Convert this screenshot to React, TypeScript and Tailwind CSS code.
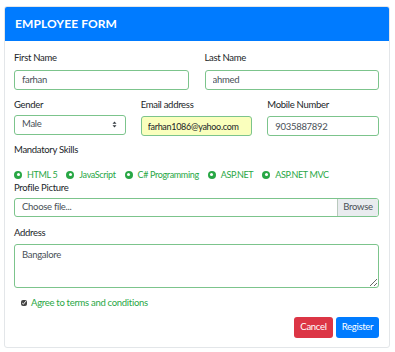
import { useState } from 'react'

const skills = ['HTML 5', 'JavaScript', 'C# Programming', 'ASP.NET', 'ASP.NET MVC']

const inputCls =
    'w-full h-[20px] rounded-[3px] border border-[#7cc48c] px-[7px] text-[9.5px] tracking-[-0.3px] text-[#495057] outline-none'

function Label({ children }: { children: React.ReactNode }) {
    return <div className="text-[9.5px] tracking-[-0.3px] leading-[14px] text-[#212529]">{children}</div>
}

export default function App() {
    const [agree, setAgree] = useState(true)

    return (
        <div className="min-h-screen bg-white pt-[6px] pl-[4px]" style={{ fontFamily: 'Lato, "Open Sans", sans-serif' }}>
            <div className="w-[386px] border border-[#e3e6e9] rounded-[3px] overflow-hidden">
                {/* Header */}
                <div className="h-[34px] bg-[#007bff] px-[10px] flex items-center">
                    <h2 className="text-white font-bold text-[12px] tracking-[0.1px]">EMPLOYEE FORM</h2>
                </div>

                {/* Body */}
                <div className="pl-[9px] pr-[10px] pt-[10px] pb-[9px]">
                    <div className="grid grid-cols-2 gap-x-[16px]">
                        <div>
                            <Label>First Name</Label>
                            <input readOnly defaultValue="farhan" className={`${inputCls} mt-[2px]`} />
                        </div>
                        <div>
                            <Label>Last Name</Label>
                            <input readOnly defaultValue="ahmed" className={`${inputCls} mt-[2px]`} />
                        </div>
                    </div>

                    <div className="grid grid-cols-3 gap-x-[15px] mt-[8px]">
                        <div>
                            <Label>Gender</Label>
                            <div className={`${inputCls} mt-[3px] flex items-center justify-between`}>
                                <span>Male</span>
                                <svg width="5" height="7" viewBox="0 0 5 7" className="mr-[1px]">
                                    <path d="M2.5 0.5 L4.5 2.8 H0.5 Z M2.5 6.5 L4.5 4.2 H0.5 Z" fill="#343a40" />
                                </svg>
                            </div>
                        </div>
                        <div>
                            <Label>Email address</Label>
                            <input
                                readOnly
                                defaultValue="farhan1086@yahoo.com"
                                className="mt-[3px] w-full h-[20px] rounded-[3px] border border-[#7cc48c] px-[6px] text-[9px] tracking-[-0.3px] bg-[#faffbd] text-[#212529] outline-none"
                            />
                        </div>
                        <div>
                            <Label>Mobile Number</Label>
                            <input readOnly defaultValue="9035887892" className={`${inputCls} mt-[3px]`} />
                        </div>
                    </div>

                    <div className="mt-[7px]">
                        <Label>Mandatory Skills</Label>
                    </div>
                    <div className="mt-[11px] flex items-center gap-x-[9px] h-[13px]">
                        {skills.map((s) => (
                            <div key={s} className="flex items-center gap-[5px]">
                                <span className="w-[8px] h-[8px] rounded-full bg-[#28a745] flex items-center justify-center">
                                    <span className="w-[3px] h-[3px] rounded-full bg-white" />
                                </span>
                                <span className="text-[9px] tracking-[-0.35px] text-[#28a745]">{s}</span>
                            </div>
                        ))}
                    </div>

                    <div>
                        <Label>Profile Picture</Label>
                    </div>
                    <div className="mt-[3px] h-[19px] flex rounded-[3px] border border-[#7cc48c] overflow-hidden text-[9.5px] tracking-[-0.3px] text-[#495057]">
                        <div className="flex-1 flex items-center px-[7px]">Choose file...</div>
                        <div className="w-[41px] bg-[#e9ecef] border-l border-[#b9c9bd] flex items-center justify-center">
                            Browse
                        </div>
                    </div>

                    <div className="mt-[9px]">
                        <Label>Address</Label>
                    </div>
                    <textarea
                        readOnly
                        defaultValue="Bangalore"
                        className="mt-[4px] block w-full h-[44px] rounded-[3px] border border-[#7cc48c] px-[7px] py-[3px] text-[9.5px] tracking-[-0.3px] text-[#495057] outline-none resize-y"
                    />

                    <label className="mt-[8px] flex items-center gap-[4px] h-[14px]">
                        <input
                            type="checkbox"
                            checked={agree}
                            onChange={() => setAgree(!agree)}
                            className="w-[6px] h-[6px] ml-[7px] accent-[#444]"
                        />
                        <span className="text-[9.5px] tracking-[-0.3px] text-[#28a745]">Agree to terms and conditions</span>
                    </label>

                    <div className="mt-[7px] flex justify-end gap-[3px]">
                        <button className="h-[21px] w-[39px] rounded-[3px] bg-[#dc3545] text-white text-[9.5px] tracking-[-0.3px]">Cancel</button>
                        <button className="h-[21px] w-[43px] rounded-[3px] bg-[#007bff] text-white text-[9.5px] tracking-[-0.3px]">Register</button>
                    </div>
                </div>
            </div>
        </div>
    )
}
